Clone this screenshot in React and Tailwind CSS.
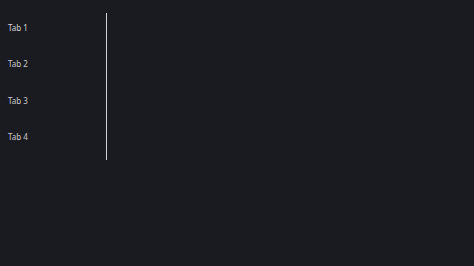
import React, { useState } from "react";

const tabs = ["Tab 1", "Tab 2", "Tab 3", "Tab 4"];

const App = () => {
  const [active, setActive] = useState(0);

  return (
    <main
      className="w-full min-h-screen bg-[#1a1b20] flex pt-[13px]"
      style={{ fontFamily: '"Noto Sans", Inter, sans-serif' }}
    >
      <div className="flex flex-col w-[107px] h-[147px] border-r border-[#d4d4d8]">
        {tabs.map((tab, i) => (
          <button
            key={tab}
            onClick={() => setActive(i)}
            className={`h-[36.6px] flex items-start pt-[9.5px] pl-[8px] text-[8px] leading-[10px] text-left ${
              active === i ? "text-[#d4d4d8]" : "text-[#cacacd]"
            }`}
          >
            {tab}
          </button>
        ))}
      </div>
      <div className="flex-1"></div>
    </main>
  );
};

export default App;
